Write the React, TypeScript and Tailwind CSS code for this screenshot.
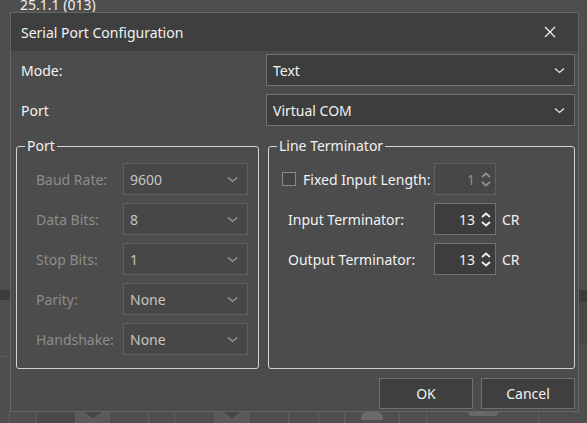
import React from "react";

const font = { fontFamily: '"Noto Sans", "Open Sans", sans-serif' };

function Chevron({ className = "" }: { className?: string }) {
  return (
    <svg width="11" height="7" viewBox="0 0 11 7" className={className}>
      <polyline points="1,1.5 5.5,5.5 10,1.5" fill="none" stroke="currentColor" strokeWidth="1.3" />
    </svg>
  );
}

function Select({ value, disabled = false, className = "" }: { value: string; disabled?: boolean; className?: string }) {
  return (
    <div
      className={`flex items-center justify-between pl-[6px] pr-[9px] h-[32px] border ${
        disabled ? "bg-[#474747] border-[#5f5f5f] text-[#c4c4c4]" : "bg-[#3d3d3d] border-[#727272] text-[#f2f2f2]"
      } ${className}`}
    >
      <span className="text-[14px]">{value}</span>
      <Chevron className={disabled ? "text-[#9a9a9a]" : "text-[#e0e0e0]"} />
    </div>
  );
}

function Spinner({ value, disabled = false }: { value: string; disabled?: boolean }) {
  return (
    <div
      className={`flex items-center justify-end w-[62px] h-[32px] border pr-[4px] ${
        disabled ? "bg-[#474747] border-[#5f5f5f] text-[#8e8e8e]" : "bg-[#3d3d3d] border-[#727272] text-[#f2f2f2]"
      }`}
    >
      <span className="text-[14px] mr-[6px]">{value}</span>
      <div className="flex flex-col items-center gap-[3px]">
        <svg width="10" height="6" viewBox="0 0 10 6">
          <polyline points="1,5 5,1.5 9,5" fill="none" stroke="currentColor" strokeWidth="1.8" />
        </svg>
        <svg width="10" height="6" viewBox="0 0 10 6">
          <polyline points="1,1 5,4.5 9,1" fill="none" stroke="currentColor" strokeWidth="1.8" />
        </svg>
      </div>
    </div>
  );
}

function GroupBox({ title, className = "", children }: { title: string; className?: string; children: React.ReactNode }) {
  return (
    <div className={`relative border-[1.5px] border-[#d2d2d2] rounded-[3px] ${className}`}>
      <span className="absolute -top-[11px] left-[8px] px-[2px] bg-[#4c4c4c] text-[14px] text-[#f2f2f2] leading-[20px]">
        {title}
      </span>
      {children}
    </div>
  );
}

const portRows = [
  { label: "Baud Rate:", value: "9600" },
  { label: "Data Bits:", value: "8" },
  { label: "Stop Bits:", value: "1" },
  { label: "Parity:", value: "None" },
  { label: "Handshake:", value: "None" },
];

export default function App() {
  return (
    <div className="relative w-[587px] h-[423px] overflow-hidden bg-[#4e4e4e]" style={font}>
      {/* app behind the dialog */}
      <div className="absolute left-[20px] -top-[5px] text-[14px] leading-[20px] text-[#f0f0f0]">25.1.1 (013)</div>
      <div className="absolute left-0 top-[290px] w-[10px] h-[10px] bg-[#3c3c3c]" />
      <div className="absolute left-0 top-[356px] w-[10px] h-px bg-[#5a5a5a]" />
      <div className="absolute right-0 top-[290px] w-[9px] h-[12px] bg-[#3a3a3a]" />
      <div className="absolute right-0 top-[302px] w-[9px] h-[42px] bg-[#474747]" />
      <div className="absolute left-0 bottom-0 w-full h-[11px] flex">
        <div className="w-[10px] border-r border-[#5e5e5e]" />
        <div className="w-[27px] border-r border-[#5e5e5e]" />
        <div className="w-[39px] border-r border-[#5e5e5e] bg-[#4a4a4a]" />
        <div className="w-[34px] border-r border-[#5e5e5e] bg-[#5a5a5a] flex justify-center">
          <div className="w-0 h-0 border-l-[9px] border-r-[9px] border-t-[6px] border-l-transparent border-r-transparent border-t-[#454545]" />
        </div>
        <div className="w-[39px] border-r border-[#5e5e5e]" />
        <div className="w-[26px] border-r border-[#5e5e5e]" />
        <div className="w-[40px] border-r border-[#5e5e5e]" />
        <div className="w-[34px] border-r border-[#5e5e5e] bg-[#5a5a5a] flex justify-center">
          <div className="w-0 h-0 border-l-[9px] border-r-[9px] border-t-[6px] border-l-transparent border-r-transparent border-t-[#454545]" />
        </div>
        <div className="w-[40px] border-r border-[#5e5e5e]" />
        <div className="w-[30px] border-r border-[#5e5e5e]" />
        <div className="w-[26px] border-r border-[#5e5e5e]" />
        <div className="w-[55px] border-r border-[#5e5e5e] flex justify-center">
          <div className="w-[22px] h-[8px] rounded-t-[6px] bg-[#6a6a6a]" />
        </div>
        <div className="w-[27px] border-r border-[#5e5e5e]" />
        <div className="w-[112px] border-r border-[#5e5e5e] flex justify-center">
          <div className="w-[30px] h-[4px] rounded-b-[4px] bg-[#686868]" />
        </div>
        <div className="flex-1" />
      </div>

      {/* dialog window */}
      <div className="absolute left-[10px] top-[12px] w-[569px] h-[400px] flex flex-col bg-[#4c4c4c] border border-[#666666]">
        <div className="h-[38px] flex items-center justify-between bg-[#3f3f3f] pl-[10px] pr-[22px] shrink-0">
          <span className="text-[14px] text-[#f2f2f2]">Serial Port Configuration</span>
          <svg width="12" height="12" viewBox="0 0 12 12">
            <path d="M1 1 L11 11 M11 1 L1 11" stroke="#eeeeee" strokeWidth="1.3" />
          </svg>
        </div>

        <div className="flex flex-col pl-[5px] pr-[3px] pt-[3px]">
          <div className="flex items-center h-[32px] mb-[8px]">
            <span className="w-[250px] pl-[5px] text-[14px] text-[#f2f2f2]">Mode:</span>
            <Select value="Text" className="flex-1" />
          </div>
          <div className="flex items-center h-[32px]">
            <span className="w-[250px] pl-[5px] text-[14px] text-[#f2f2f2]">Port</span>
            <Select value="Virtual COM" className="flex-1" />
          </div>

          <div className="flex gap-[9px] mt-[20px]">
            <GroupBox title="Port" className="w-[243px] h-[223px] pt-[16px] pl-[19px]">
              <div className="flex flex-col gap-[8px]">
                {portRows.map((r) => (
                  <div key={r.label} className="flex items-center">
                    <span className="w-[87px] text-[14px] text-[#8c8c8c]">{r.label}</span>
                    <Select value={r.value} disabled className="w-[125px]" />
                  </div>
                ))}
              </div>
            </GroupBox>

            <GroupBox title="Line Terminator" className="w-[307px] h-[223px] pt-[16px] pl-[13px]">
              <div className="flex flex-col gap-[8px]">
                <div className="flex items-center">
                  <div className="w-[14px] h-[14px] border border-[#8a8a8a] bg-[#444444]" />
                  <span className="ml-[7px] w-[131px] text-[14px] text-[#f2f2f2]">Fixed Input Length:</span>
                  <Spinner value="1" disabled />
                </div>
                <div className="flex items-center">
                  <span className="pl-[6px] w-[152px] text-[14px] text-[#f2f2f2]">Input Terminator:</span>
                  <Spinner value="13" />
                  <span className="ml-[6px] text-[14px] text-[#f2f2f2]">CR</span>
                </div>
                <div className="flex items-center">
                  <span className="pl-[6px] w-[152px] text-[14px] text-[#f2f2f2]">Output Terminator:</span>
                  <Spinner value="13" />
                  <span className="ml-[6px] text-[14px] text-[#f2f2f2]">CR</span>
                </div>
              </div>
            </GroupBox>
          </div>

          <div className="flex justify-end gap-[8px] mt-[9px]">
            <button className="w-[94px] h-[31px] bg-[#3f3f3f] border border-[#6e6e6e] text-[14px] text-[#f2f2f2]">OK</button>
            <button className="w-[94px] h-[31px] bg-[#3f3f3f] border border-[#6e6e6e] text-[14px] text-[#f2f2f2]">Cancel</button>
          </div>
        </div>
      </div>
    </div>
  );
}
